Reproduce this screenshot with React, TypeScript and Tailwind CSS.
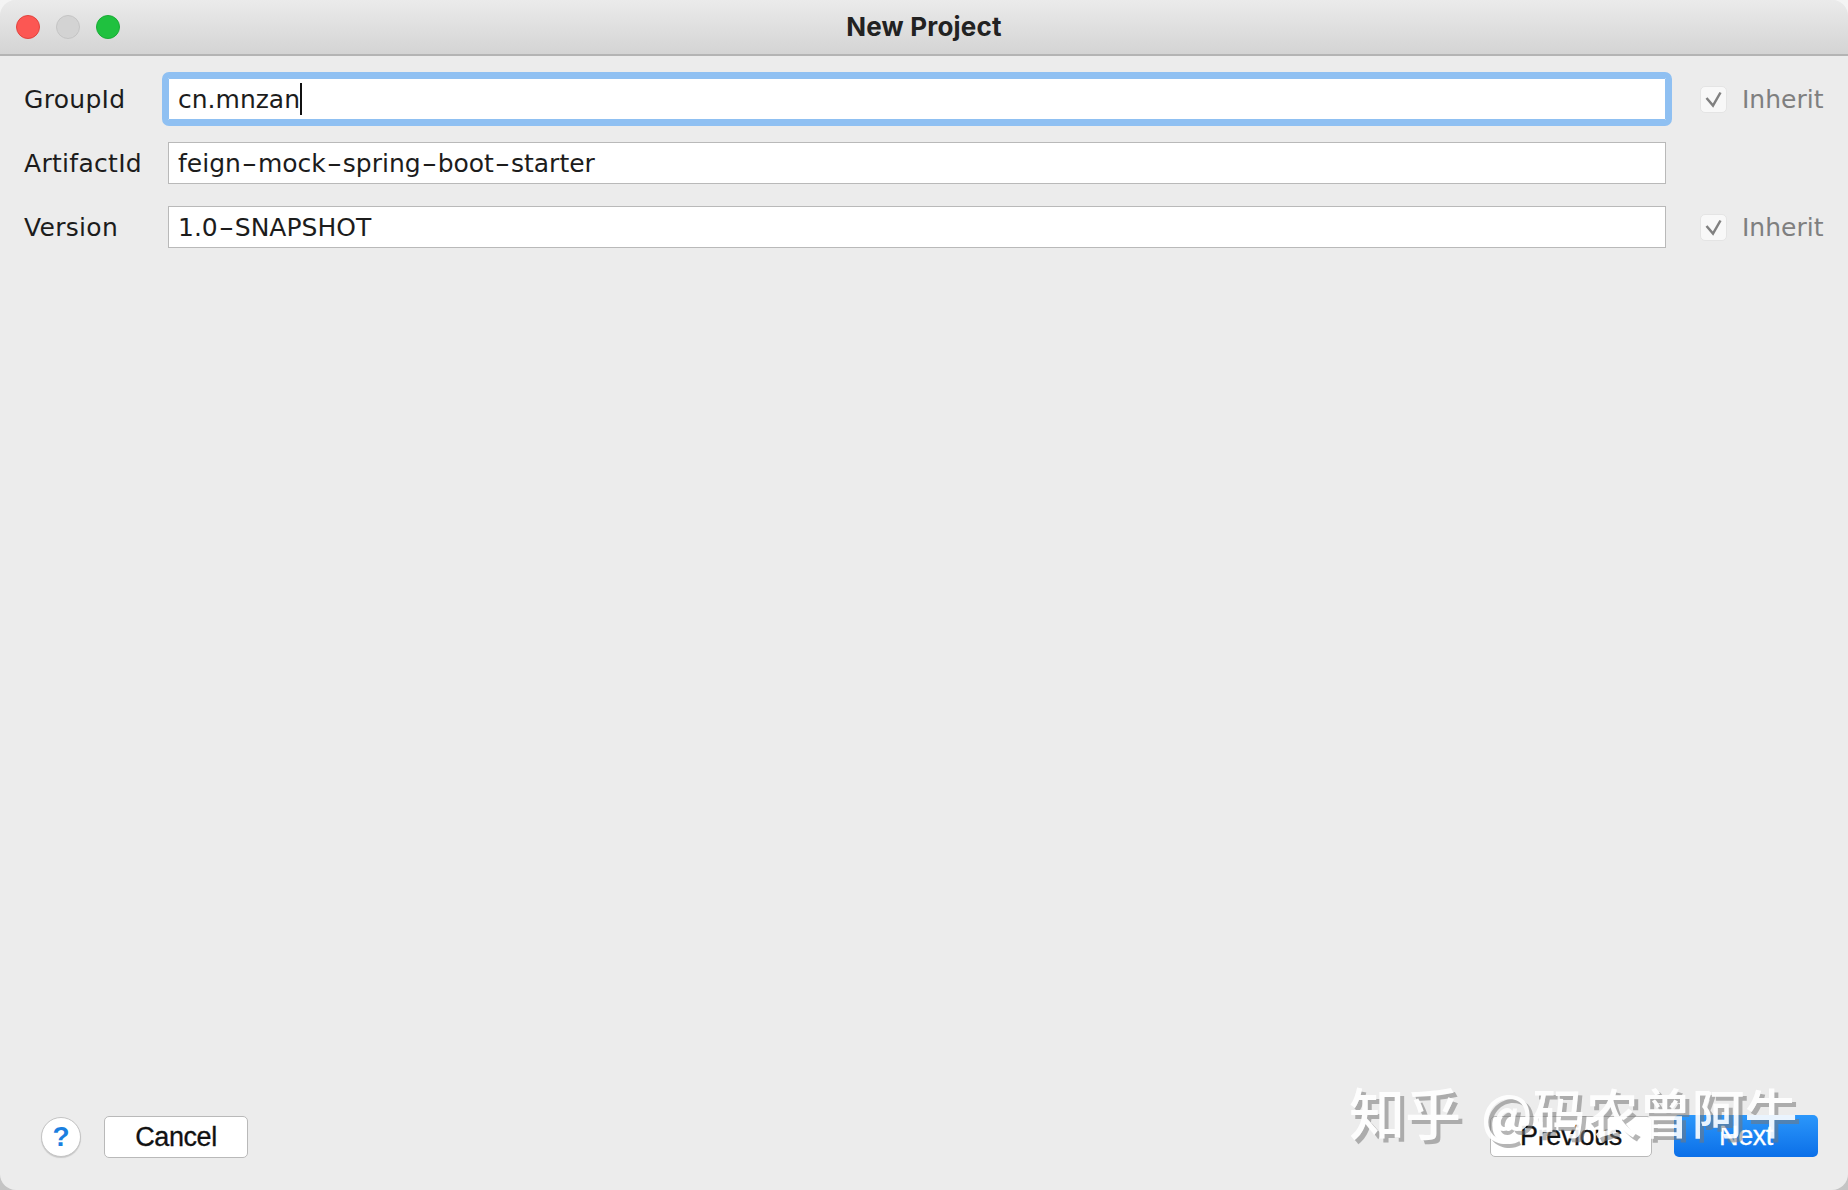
const labelFont = "font-['DejaVu_Sans',sans-serif]";

// the reference font draws much wider hyphens than DejaVu
function InputText({ value }: { value: string }) {
  const parts = value.split("-");
  return (
    <span>
      {parts.map((part, i) => (
        <span key={i}>
          {i > 0 && <span className="inline-block mx-[4px] scale-x-[1.7]">-</span>}
          {part}
        </span>
      ))}
    </span>
  );
}

function Field({
  label,
  value,
  focused,
  inherit,
}: {
  label: string;
  value: string;
  focused?: boolean;
  inherit?: boolean;
}) {
  return (
    <div className={`flex items-center h-[42px] text-[25px] leading-none text-[#1c1c1c] ${labelFont}`}>
      <div className="w-[144px] shrink-0 tracking-[0.3px]">{label}</div>
      <div
        className={`w-[1498px] shrink-0 h-[42px] bg-white flex items-center pl-[9px] border ${
          focused ? "outline-[6px] outline-solid outline-[#8fc0f2] border-[#8fc0f2] rounded-[1px]" : "border-[#b9b9b9]"
        }`}
      >
        <InputText value={value} />
        {focused && <span className="w-[2px] h-[32px] bg-[#111]" />}
      </div>
      {inherit && (
        <div className="flex items-center ml-[34px] text-[#7f7f7f]">
          <div className="w-[27px] h-[27px] rounded-[5px] bg-[#f8f8f8] border border-[#e4e4e4] flex items-center justify-center">
            <svg width="17" height="17" viewBox="0 0 17 17" fill="none">
              <path d="M1.5 7 L8 14.5 L15.5 1.5" stroke="#808080" strokeWidth="2.5" />
            </svg>
          </div>
          <span className="ml-[15px]">Inherit</span>
        </div>
      )}
    </div>
  );
}

function Button({ label, primary, className }: { label: string; primary?: boolean; className: string }) {
  return (
    <div
      className={`flex items-center justify-center rounded-[5px] text-[27px] tracking-[-0.4px] [-webkit-text-stroke:0.3px] font-['Liberation_Sans',sans-serif] ${className} ${
        primary
          ? "bg-gradient-to-b from-[#2b97fb] to-[#0b6fe8] text-white"
          : "bg-white border border-[#b9b9b9] text-[#111]"
      }`}
    >
      {label}
    </div>
  );
}

export default function App() {
  return (
    <div className="w-[1848px] h-[1190px] bg-gradient-to-b from-[#f4f4f4] to-[#c4c4c4] overflow-hidden">
      <div className="relative w-full h-full bg-[#ececec] rounded-[16px] overflow-hidden flex flex-col">
        <div className="relative h-[56px] shrink-0 bg-gradient-to-b from-[#ebebeb] to-[#d4d4d4] border-b-2 border-[#b4b4b4] flex items-center pl-[16px] gap-[16px]">
          <div className="w-[24px] h-[24px] rounded-full bg-[#fc5753] border border-[#e0443e]" />
          <div className="w-[24px] h-[24px] rounded-full bg-[#d3d3d3] border border-[#c4c4c4]" />
          <div className="w-[24px] h-[24px] rounded-full bg-[#1fc13f] border border-[#1aab36]" />
          <div className="absolute inset-x-0 top-0 h-[53px] flex items-center justify-center text-[26px] font-bold text-[#222] font-['Inter',sans-serif] tracking-[0.2px]">
            New Project
          </div>
        </div>

        <div className="flex-1 flex flex-col px-[24px] pt-[22px] gap-[22px]">
          <Field label="GroupId" value="cn.mnzan" focused inherit />
          <Field label="ArtifactId" value="feign-mock-spring-boot-starter" />
          <Field label="Version" value="1.0-SNAPSHOT" inherit />
        </div>

        <div className="flex items-center justify-between pl-[41px] pr-[30px] pb-[32px]">
          <div className="flex items-center gap-[23px]">
            <div className="w-[40px] h-[40px] rounded-full bg-white border border-[#c4c4c4] shadow-[0_1px_1px_rgba(0,0,0,0.15)] flex items-center justify-center text-[28px] font-bold text-[#1a7fe0] font-['Liberation_Sans',sans-serif]">
              ?
            </div>
            <Button label="Cancel" className="w-[144px] h-[42px]" />
          </div>
          <div className="flex items-center gap-[22px] -translate-y-[1px]">
            <Button label="Previous" className="w-[162px] h-[41px]" />
            <Button label="Next" primary className="w-[144px] h-[42px]" />
          </div>
        </div>

        {/* watermark */}
        <div className="absolute left-[1349px] top-[1079px] h-[64px] flex items-center gap-[20px] leading-none text-white font-medium whitespace-pre opacity-90 font-['Noto_Sans_CJK_SC',sans-serif] [text-shadow:4px_4px_0_rgba(120,120,120,0.6)]">
          <span className="text-[56px]">知乎</span>
          <span className="text-[53px]">@码农曾阿牛</span>
        </div>
      </div>
    </div>
  );
}
